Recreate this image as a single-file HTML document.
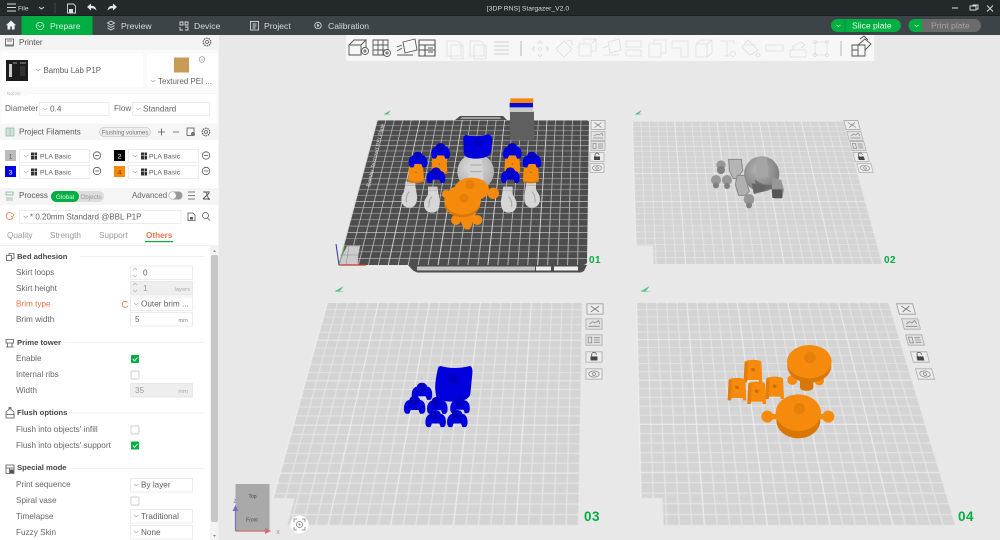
<!DOCTYPE html>
<html><head><meta charset="utf-8"><title>Stargazer</title>
<style>
html,body{margin:0;padding:0;background:#e8e8e8;width:1000px;height:540px;overflow:hidden}
#w{position:relative;width:1000px;height:540px;overflow:hidden;filter:blur(.35px)}
.p{position:absolute;left:0;top:0;width:250px;height:250px;transform-origin:0 0;background-color:#d4d4d4;
background-image:linear-gradient(to right,#efefef 1.2px,transparent 1.2px),linear-gradient(to bottom,#efefef 1.1px,transparent 1.1px),linear-gradient(to right,#e6e6e6 .9px,transparent .9px),linear-gradient(to bottom,#e6e6e6 1px,transparent 1px);
background-size:50px 50px,50px 50px,10px 10px,10px 10px}
.d{background-color:#4d4d4d;background-image:linear-gradient(to right,#d4d4d4 1.1px,transparent 1.1px),linear-gradient(to bottom,#d4d4d4 1.1px,transparent 1.1px),linear-gradient(to right,#b0b0b0 .9px,transparent .9px),linear-gradient(to bottom,#b0b0b0 1px,transparent 1px);border-radius:4px}
svg{position:absolute;left:0;top:0}
text{font-family:"Liberation Sans",sans-serif;font-size:8.2px;fill:#5f5f5f}
.t{fill:#d8dcdc;font-size:8.6px}
.b{font-weight:bold;fill:#444;font-size:7.7px}
.l{fill:#666}
.hd{fill:#555;font-size:8px}
.f{fill:#555;font-size:6.8px}
.n{fill:#00ae42;font-weight:bold;letter-spacing:.5px}
.ic{fill:none;stroke:#555;stroke-width:.8}
.fa{fill:none;stroke:#dedede;stroke-width:.8}
.dk{fill:none;stroke:#555;stroke-width:.9}
.tb{fill:none;stroke:#d7dbdb;stroke-width:.9}
.box{fill:#fff;stroke:#e4e4e4;stroke-width:.7}
.dis{fill:#eee;stroke:#e2e2e2;stroke-width:.7}
.blu{fill:#0000dc}.bd{fill:#0000c0}
.or{fill:#f58a0c}.od{fill:#d97706}
.wh{fill:#d6d6d6}.wd{fill:#9b9b9b}
.gr{fill:#979797}.gd{fill:#6d6d6d}
</style></head><body><div id="w">

<div class="p d" style="transform:matrix3d(.848,0,0,0,-.3568,.4224,0,-.000594,0,0,1,0,377,120,0,1)"></div>
<div class="p" style="transform:matrix3d(.844,0,0,0,-.346,.4216,0,-.000569,0,0,1,0,632,121,0,1);clip-path:polygon(0 0,100% 0,100% 100%,18px 100%,18px 222px,0 222px)"></div>
<div class="p" style="transform:matrix3d(1.02,0,0,0,-.4444,.5028,0,-.000741,0,0,1,0,327,302,0,1);clip-path:polygon(0 0,100% 0,100% 100%,18px 100%,18px 225px,0 225px)"></div>
<div class="p" style="transform:matrix3d(1.008,0,0,0,-.4864,.4772,0,-.00079,0,0,1,0,636,302,0,1);clip-path:polygon(0 0,100% 0,100% 100%,18px 100%,18px 225px,0 225px)"></div>

<svg width="1000" height="540" viewBox="0 0 1000 540" xmlns="http://www.w3.org/2000/svg">
<defs>
<radialGradient id="dome" cx=".42" cy=".38" r=".62"><stop offset="0" stop-color="#b8b8b8"/><stop offset="1" stop-color="#7c7c7c"/></radialGradient>
<radialGradient id="dome1" cx=".42" cy=".38" r=".62"><stop offset="0" stop-color="#dedede"/><stop offset="1" stop-color="#b0b0b0"/></radialGradient>
<path id="ch" d="M0 0l2.2 1.8L4.400 0" fill="none" stroke="#aaa" stroke-width=".7"/>
<g id="gear"><circle r="3.800" fill="none" stroke="#555" stroke-width="1.100" stroke-dasharray="1.600 .8"/><circle r="1.500" fill="none" stroke="#555" stroke-width=".8"/></g>
<g id="minus"><circle r="3.700" fill="none" stroke="#555" stroke-width=".8"/><path d="M-2 0h4" stroke="#555" stroke-width=".8"/></g>
<g id="spool"><path d="M0 0h3v3h-3zM3.500 0h2.500v3h-2.500zM0 3.500h3v3.500h-3zM3.500 3.500h2.500v3.500h-2.500z" fill="#333"/></g>
<g id="pen"><path d="M0 4l7-4-3 4 4 .5H0z" fill="#5cc08a"/></g>
<g id="cb"><rect width="8" height="8" rx=".8" fill="#fff" stroke="#bbb" stroke-width=".7"/></g>
<g id="cg"><rect width="8" height="8" rx=".8" fill="#00ae42"/><path d="M1.800 4l1.700 1.800 3-3.200" stroke="#fff" stroke-width=".9" fill="none"/></g>
<g id="sx"><rect x="-7" y="-4.500" width="14" height="9" fill="#ececec" stroke="#999" stroke-width=".7"/><path d="M-3.500-2.500l7 5M3.500-2.500l-7 5" stroke="#777" stroke-width=".7"/></g>
<g id="sa"><rect x="-7" y="-4.500" width="14" height="9" fill="#e2e2e2" stroke="#aaa" stroke-width=".7"/><path d="M-5 2h10M-4 0l3-2 2 1 3-2 1 3" stroke="#888" stroke-width=".7" fill="none"/></g>
<g id="so"><rect x="-7" y="-4.500" width="14" height="9" fill="#e2e2e2" stroke="#aaa" stroke-width=".7"/><path d="M-5-2.500h3v5h-3zM0-2h5M0 0h5M0 2h5" stroke="#888" stroke-width=".7" fill="none"/></g>
<g id="sl"><rect x="-7" y="-4.500" width="14" height="9" fill="#ececec" stroke="#aaa" stroke-width=".7"/><rect x="-3" y="-.5" width="6" height="3.500" fill="#444"/><path d="M-2-.5v-1.500a2 2 0 0 1 4 0" stroke="#444" fill="none" stroke-width=".7"/></g>
<g id="se"><rect x="-7" y="-4.500" width="14" height="9" fill="#ececec" stroke="#aaa" stroke-width=".7"/><ellipse rx="4.500" ry="2.700" fill="none" stroke="#888" stroke-width=".7"/><circle r="1.300" fill="none" stroke="#888" stroke-width=".7"/></g>
<g id="cap"><path d="M-28 22c0-14 8-22 14-22 2-14 26-14 28 0 8 0 14 8 14 22 0 8-2 12-6 14h-8l-4-10h-20l-4 10h-8c-4-2-6-6-6-14z"/></g>
<g id="blk"><path d="M-21 0c8-5 34-5 42 0l3 44c-8 8-40 8-48 0z" class="or"/><path d="M-24 44c8 8 40 8 48 0v6c-8 6-40 6-48 0z" class="od"/><circle r="1.800" cy="22" fill="#7a4a05"/></g>
<g id="brk"><path d="M-25 5c10-7 40-7 50 0l3 62h-10l-1-7h-34l-1 7h-10z" class="or"/><path d="M-25 5l-3 62h10l1-7 2-54z" class="od" opacity=".6"/><path d="M-5 24h10v9h-10z" fill="#c96c05"/></g>
<g id="grip"><path d="M-14 0h28l7 42c2 24-8 36-22 36-15 0-25-9-25-26 0-14 9-20 12-30z" class="wh"/><path d="M-2 30c-6 6-11 14-9 32" stroke="#a5a5a5" stroke-width="3" fill="none"/><path d="M-12 4h24M-14 12h28" stroke="#aaa" stroke-width="2"/></g>
</defs>

<!-- plate 1 extras -->
<path d="M455 120l5-4h43l4 4z" fill="#4d4d4d"/><path d="M460 119l2-2h38l1 2z" fill="#a0a0a0"/>
<path d="M408 265h179l-3 6-3 1.500H417l-4-2z" fill="#4d4d4d"/>
<rect x="417" y="266.500" width="118" height="4" fill="#c4c4c4"/><rect x="536" y="266.500" width="15" height="4" fill="#eee"/><rect x="554" y="266.500" width="24" height="4" fill="#eee"/>
<text transform="translate(370,187) rotate(-77)" style="font-size:5.500px;fill:#ddd">Bambu Textured PEI Plate</text>
<path d="M338 265h20v-8l2-11h-13l-4 8z" fill="#ccc" stroke="#999" stroke-width=".5"/><path d="M349 246l-3 19M340 255h19" stroke="#888" stroke-width=".5"/>
<path d="M339 265h27" stroke="#c33" stroke-width="1.200"/><path d="M336 244l3 21" stroke="#33a" stroke-width="1"/><path d="M339 265l6-20" stroke="#5a5" stroke-width=".8"/>

<!-- models plate 1 -->
<g transform="translate(330,90) scale(.3333)">
<rect x="540" y="65" width="72" height="86" fill="#5f5f5f"/><rect x="539" y="51" width="70" height="15" fill="#c9c9c9"/><rect x="539" y="38" width="70" height="14" fill="#0a0ad8"/><rect x="541" y="25" width="69" height="14" fill="#f58a0c"/>
<circle cx="437" cy="245" r="55" fill="url(#dome1)"/><path d="M420 200h34l6 70h-44z" fill="#d5d5d5"/><path d="M420 225h34M420 245h34" stroke="#a5a5a5" stroke-width="3"/>
<path d="M408 135c20 5 40 5 65-2 10 0 14 8 14 20l-4 35c-3 10-22 18-44 18-25 0-38-6-38-20l-1-34c0-12 2-16 8-17z" class="blu"/><circle cx="445" cy="158" r="13" class="bd"/>
<use href="#grip" x="240" y="275"/><use href="#grip" x="308" y="290"/><g transform="translate(534,290) scale(-1,1)"><use href="#grip"/></g><g transform="translate(604,275) scale(-1,1)"><use href="#grip"/></g>
<use href="#blk" x="258" y="225"/><use href="#blk" x="328" y="200"/><use href="#blk" x="547" y="200"/><use href="#blk" x="603" y="225"/>
<g class="blu"><use href="#cap" x="264" y="196"/><use href="#cap" x="332" y="170"/><use href="#cap" x="318" y="243"/><use href="#cap" x="547" y="170"/><use href="#cap" x="541" y="243"/><use href="#cap" x="606" y="196"/></g>
<g class="bd"><circle cx="262" cy="197" r="11"/><circle cx="330" cy="172" r="11"/><circle cx="316" cy="245" r="11"/><circle cx="545" cy="172" r="11"/><circle cx="539" cy="245" r="11"/><circle cx="604" cy="197" r="11"/></g>
<circle cx="378" cy="390" r="15" class="or"/><circle cx="442" cy="390" r="15" class="or"/><path d="M385 370h50l-8 32-8 16h-14l-10-16z" class="or"/>
<ellipse cx="397" cy="340" rx="54" ry="42" class="od"/>
<ellipse cx="425" cy="298" rx="52" ry="35" class="or"/><ellipse cx="398" cy="330" rx="55" ry="44" class="or"/>
<circle cx="348" cy="312" r="12" class="or"/><circle cx="490" cy="310" r="17" class="or"/><circle cx="420" cy="284" r="14" fill="#e57f08"/><circle cx="402" cy="324" r="14" fill="#e57f08"/>
</g>

<!-- models plate 2 -->
<g transform="translate(620,100) scale(.3333)">
<circle cx="425" cy="222" r="53" fill="url(#dome)"/><path d="M410 172h30l6 60h-40z" fill="#a5a5a5"/><path d="M405 238c25 22 50 22 70 2l-4 28h-64z" class="gd"/>
<path d="M456 232l28 8 8 30-6 26h-24l-6-30z" class="gr"/><path d="M455 268h32v26h-30z" fill="#555"/>
<path d="M326 178h38l4 34-16 24h-12l-12-24z" fill="#b5b5b5" stroke="#888" stroke-width="3"/>
<path d="M352 226h22l14 48-12 12h-20l-10-32z" fill="#b0b0b0" stroke="#888" stroke-width="3"/>
<circle cx="303" cy="195" r="14" class="gr"/><circle cx="303" cy="210" r="12" fill="#7f7f7f"/><circle cx="288" cy="240" r="15" class="gr"/><circle cx="288" cy="256" r="9" fill="#7f7f7f"/><circle cx="321" cy="240" r="15" class="gr"/><circle cx="321" cy="258" r="9" fill="#7f7f7f"/><circle cx="387" cy="298" r="16" class="gr"/><circle cx="387" cy="316" r="9" fill="#7f7f7f"/>
<path d="M395 250l42 6-4 18-32 8z" fill="#666"/>
</g>

<!-- models plate 3 -->
<g transform="translate(270,280) scale(.3333)">
<path d="M512 258c28 8 55 8 88 0 8 3 8 14 7 24l-6 60c-3 14-18 22-50 23-32 1-50-6-53-18l-2-16c-2-20 4-50 8-66 1-4 4-7 8-7z" class="blu"/><circle cx="550" cy="296" r="15" class="bd"/>
<g class="blu"><g transform="translate(456,320) scale(1.100)"><use href="#cap"/></g><g transform="translate(434,360) scale(1.150)"><use href="#cap"/></g><g transform="translate(502,362) scale(1.100)"><use href="#cap"/></g><g transform="translate(570,362) scale(1.050)"><use href="#cap"/></g><g transform="translate(497,402) scale(1.100)"><use href="#cap"/></g><g transform="translate(562,402) scale(1.100)"><use href="#cap"/></g></g>
<g class="bd"><circle cx="454" cy="322" r="12"/><circle cx="432" cy="365" r="13"/><circle cx="498" cy="364" r="13"/><circle cx="568" cy="364" r="13"/><circle cx="492" cy="405" r="13"/><circle cx="558" cy="405" r="13"/></g>
</g>

<!-- models plate 4 -->
<g transform="translate(630,280) scale(.3333)">
<path d="M510 300h40v22c0 14-40 14-40 0z" class="od"/>
<circle cx="487" cy="300" r="15" class="or"/><circle cx="568" cy="302" r="14" class="or"/>
<ellipse cx="538" cy="258" rx="66" ry="50" class="od"/>
<ellipse cx="538" cy="245" rx="67" ry="50" class="or"/><circle cx="540" cy="233" r="17" fill="#e57f08"/>
<use href="#brk" x="369" y="240"/><use href="#brk" x="321" y="294"/><use href="#brk" x="434" y="290"/><use href="#brk" x="380" y="305"/>
<ellipse cx="505" cy="422" rx="66" ry="53" class="od"/>
<circle cx="412" cy="410" r="18" class="or"/><circle cx="595" cy="410" r="18" class="or"/><rect x="424" y="402" width="24" height="16" class="or"/><rect x="560" y="402" width="24" height="16" class="or"/>
<ellipse cx="505" cy="398" rx="68" ry="55" class="or"/>
<circle cx="508" cy="386" r="17" fill="#e57f08"/>
</g>

<!-- plate labels/pens/side icons -->
<use href="#pen" x="384" y="110"/><use href="#pen" x="635" y="110"/>
<g transform="translate(335,286) scale(1.250)"><use href="#pen"/></g><g transform="translate(641,286) scale(1.250)"><use href="#pen"/></g>
<text x="589" y="263" class="n" style="font-size:10px">01</text><text x="884" y="263" class="n" style="font-size:10px">02</text>
<text x="584" y="521" class="n" style="font-size:13.500px">03</text><text x="958" y="521" class="n" style="font-size:13.500px">04</text>
<use href="#sx" x="598" y="125"/><use href="#sa" x="598" y="136"/><use href="#so" x="598" y="146"/><use href="#sl" x="597" y="157"/><use href="#se" x="597" y="168"/>
<g transform="translate(852,125) skewX(15)"><use href="#sx"/></g><g transform="translate(855,136) skewX(15)"><use href="#sa"/></g><g transform="translate(858,146) skewX(15)"><use href="#so"/></g><g transform="translate(861,157) skewX(15)"><use href="#sl"/></g><g transform="translate(865,168) skewX(15)"><use href="#se"/></g>
<g transform="translate(595,309) scale(1.150)"><use href="#sx"/></g><g transform="translate(594,324) scale(1.150)"><use href="#sa"/></g><g transform="translate(594,340) scale(1.150)"><use href="#so"/></g><g transform="translate(594,357) scale(1.150)"><use href="#sl"/></g><g transform="translate(594,374) scale(1.150)"><use href="#se"/></g>
<g transform="translate(906,309) scale(1.150) skewX(15)"><use href="#sx"/></g><g transform="translate(911,324) scale(1.150) skewX(15)"><use href="#sa"/></g><g transform="translate(915,340) scale(1.150) skewX(15)"><use href="#so"/></g><g transform="translate(920,357) scale(1.150) skewX(15)"><use href="#sl"/></g><g transform="translate(925,374) scale(1.150) skewX(15)"><use href="#se"/></g>

<!-- toolbar -->
<rect x="346" y="35" width="528" height="26" fill="#f7f7f7"/>
<g class="dk"><path d="M349 45h12v10h-12zM349 45l5-5h12l-5 5M366 40v9"/><circle cx="365" cy="51" r="3.500" fill="#fff"/><path d="M363 51h4M365 49v4"/>
<path d="M373 40h15v15h-15zM373 45h15M373 50h15M378 40v15M383 40v15"/><circle cx="387" cy="53" r="3.500" fill="#fff"/><path d="M385 53h4M387 51v4"/>
<path d="M403 42l12-3 2 11-12 3zM397 55h16M397 47l5-2M397 51l5-3"/>
<path d="M419 40h16v16h-16zM419 45h16M419 50h16M425 45v11M428 48h5M428 52h5" stroke-width="1.100"/></g>
<g class="fa"><path d="M447 41h11l3 3v12h-14zM451 45h12v14h-12z"/><path d="M470 41h11l3 3v12h-14zM474 45h12v14h-12z"/><path d="M494 42h15M494 46h15M494 50h15M494 54h15" stroke-width="1.500"/>
<path d="M540 41l-2 2h4zM540 57l-2-2h4zM532 49l2-2v4zM549 49l-2-2v4z"/><circle cx="540" cy="49" r="1.500"/>
<path d="M564 41l8 8-8 8-8-8zM567 40l5 1v4"/><path d="M579 44h12v12h-12zM584 44v-5h12v12h-5M596 39l-4 4"/>
<path d="M608 42l11-3 2 11-11 3zM603 55h16M603 48l5-2"/><path d="M626 41h15v6h-15zM626 50h15v6h-15z"/><path d="M649 44h12v13h-12zM654 44v-4h12v13h-5"/><path d="M672 41h16v16h-7v-9h-9z"/>
<path d="M696 44l5-4h11v13l-5 4h-11zM696 44h11v13M707 44l5-4"/><path d="M720 41h14v3M727 41v15M724 56h6"/><circle cx="733" cy="54" r="2.500"/>
<path d="M748 40l10 10-8 5-8-8zM744 45h12"/><circle cx="758" cy="55" r="2"/><rect x="766" y="45" width="17" height="6"/><path d="M790 50h16v7h-16zM793 50v-4l8-4 4 3-4 3"/><rect x="815" y="42" width="12" height="13" rx="1"/><circle cx="815" cy="42" r="1.500"/><circle cx="827" cy="42" r="1.500"/><circle cx="815" cy="55" r="1.500"/><circle cx="827" cy="55" r="1.500"/></g>
<path d="M521 41v15M841 41v15" stroke="#c4c4c4" stroke-width="1.300"/>
<g class="dk" stroke-width="1"><path d="M852 45h13v11h-13zM852 50h6M858 45v11M858 45l7-6 6 5-6 6"/><path d="M860 39l4-3 4 4"/></g>

<!-- top bars -->
<rect x="0" y="0" width="1000" height="15.500" fill="#23292b"/>
<rect x="0" y="15.500" width="1000" height="19.500" fill="#3c4447"/>
<path d="M0 15.500h1000" stroke="#1b1f20"/>
<path d="M7 4h9M7 7.500h9M7 11h9" stroke="#d8dcdc" stroke-width="1"/><text x="18" y="10.500" class="t" style="font-size:6.500px">File</text>
<path d="M39 7l2.500 2 2.500-2" class="tb"/><path d="M55 3v10" stroke="#3c4447"/>
<path d="M67.500 4h6l2 2v7h-8z" class="tb"/><rect x="69" y="9" width="4" height="3.500" fill="#d8dcdc"/>
<path d="M87 7l4-3.500v2.200c3.500 0 5 1.500 5.500 5-1.500-2-3-2.500-5.500-2.500v2.300z" fill="#e3e6e6"/>
<path d="M117 7l-4-3.500v2.200c-3.500 0-5 1.500-5.500 5 1.500-2 3-2.500 5.500-2.500v2.300z" fill="#e3e6e6"/>
<text x="528" y="10.500" text-anchor="middle" class="t" style="font-size:6.800px">[3DP RNS] Stargazer_V2.0</text>
<path d="M952 8h6" stroke="#d8dcdc" stroke-width="1"/><path d="M970 6h6v4h-6zM973 6v-1h5v4h-2" class="tb"/><path d="M987 5.500l6 6M993 5.500l-6 6" stroke="#d8dcdc" stroke-width=".9"/>
<rect x="21.500" y="16" width="71" height="19" fill="#00ae42"/>
<path d="M11 20.500l-5 4.800h1.500v4.200h2.800v-3h1.500v3h2.800v-4.200H16z" fill="#f2f2f2"/>
<circle cx="40" cy="26" r="3.700" fill="none" stroke="#c7ecd5" stroke-width=".8"/><path d="M37.500 25l2.500 1.500 2.500-1.500" fill="none" stroke="#c7ecd5" stroke-width=".7"/>
<text x="50" y="29" class="t" style="fill:#d6f3e1">Prepare</text>
<path d="M107.500 23l3.500-2 3.500 2-3.500 2zM107.500 25.500l3.500 2 3.500-2M107.500 28l3.500 2 3.500-2" class="tb"/><text x="121" y="29" class="t">Preview</text>
<path d="M180 22h3v3h-3zM185 22h3v3h-3zM180 27v3h3M185 27h3v3h-3" class="tb"/><text x="194" y="29" class="t">Device</text>
<rect x="250.500" y="21.500" width="8" height="8.500" class="tb"/><path d="M252.500 24h4M252.500 26h4M252.500 28h3" class="tb" stroke-width=".6"/><text x="264" y="29" class="t">Project</text>
<circle cx="318" cy="25.500" r="3.200" class="tb"/><circle cx="318" cy="25.500" r="1.200" fill="#d8dcdc"/><text x="328" y="29" class="t">Calibration</text>
<rect x="831" y="19" width="70" height="13" rx="6.500" fill="#00ae42"/><path d="M845 19v13" stroke="#048a38" stroke-width=".8"/><path d="M836.500 25l2 1.500 2-1.500" stroke="#d8f3e2" fill="none" stroke-width=".7"/>
<text x="852" y="28.500" style="fill:#eafaf0;font-size:8.600px">Slice plate</text>
<rect x="909" y="19" width="72" height="13" rx="6.500" fill="#6b6b6b"/><path d="M915 19h7v13h-7a6.500 6.500 0 0 1 0-13z" fill="#00ae42"/><path d="M914.500 25l2 1.500 2-1.500" stroke="#d8f3e2" fill="none" stroke-width=".7"/>
<text x="931" y="28.500" style="fill:#a5a5a5;font-size:8.600px">Print plate</text>

<!-- left panel -->
<rect x="0" y="35" width="218.500" height="505" fill="#fff"/>
<rect x="0" y="35" width="218" height="15" fill="#f3f4f3"/>
<rect x="5.500" y="39" width="8" height="6" class="ic"/><path d="M7 41h5M5 46h9" class="ic"/><text x="19" y="45" class="hd">Printer</text><use href="#gear" x="207" y="42"/>
<rect x="0" y="50" width="218" height="75" fill="#fafafa"/>
<rect x="2" y="53" width="141" height="34" rx="2" fill="#fff"/><rect x="147" y="53" width="70" height="34" rx="2" fill="#fff"/>
<rect x="6" y="60" width="22" height="21" fill="#1c1c1c"/><path d="M9 64v13h3v-13z" fill="#ccc"/><path d="M13 63h4M20 63h6" stroke="#999"/><rect x="20" y="66" width="5" height="10" fill="#333"/>
<use href="#ch" x="36" y="69"/><text x="43.500" y="73" style="font-size:7.900px">Bambu Lab P1P</text>
<rect x="174" y="57.500" width="15" height="15" fill="#c79a55"/><circle cx="202" cy="59.500" r="2.800" fill="none" stroke="#888" stroke-width=".6"/><path d="M202 58.500v2.500" stroke="#888" stroke-width=".6"/>
<use href="#ch" x="151" y="80"/><text x="158" y="84" style="font-size:7.900px">Textured PEI ...</text>
<rect x="2" y="93" width="214" height="30" fill="#fff"/><path d="M3 93.500h213" stroke="#ececec" stroke-width=".6"/><rect x="5" y="90" width="22" height="6" fill="#fafafa"/><text x="7" y="95" style="font-size:4.500px;fill:#bbb">Nozzle</text>
<text x="5" y="111" class="l">Diameter</text><rect x="39.500" y="102.500" width="69.500" height="13" class="box"/><use href="#ch" x="43" y="108"/><text x="50" y="111.500">0.4</text>
<text x="114" y="111" class="l">Flow</text><rect x="132.500" y="102.500" width="77" height="13" class="box"/><use href="#ch" x="136" y="108"/><text x="143" y="111.500">Standard</text>

<rect x="0" y="124" width="218" height="16" fill="#f6f6f6"/>
<rect x="6" y="128" width="8" height="8" fill="#cfe6d6" stroke="#7eb08f" stroke-width=".6"/><path d="M10 128v8" stroke="#7eb08f" stroke-width=".6"/>
<text x="19" y="134.500" class="hd">Project Filaments</text>
<rect x="99.500" y="127.500" width="51" height="9" rx="4.500" fill="#eee" stroke="#bbb" stroke-width=".6"/><text x="125" y="134.500" text-anchor="middle" style="font-size:6px;fill:#777">Flushing volumes</text>
<path d="M158 132h7M161.500 128.500v7M173 132h6" stroke="#555" stroke-width=".8"/><rect x="187" y="128" width="7" height="7.500" class="ic"/><circle cx="193" cy="134" r="2" fill="#777"/><use href="#gear" x="206" y="132"/>

<rect x="5" y="150" width="11" height="11" fill="#bcbcbc"/><text x="10.500" y="158.500" text-anchor="middle" class="f" style="fill:#555">1</text>
<rect x="19.500" y="149.500" width="70" height="13" class="box"/><use href="#ch" x="24" y="155"/><use href="#spool" x="31" y="152.500"/><text x="40" y="158.500" class="f">PLA Basic</text><use href="#minus" x="97" y="155.500"/>
<rect x="114" y="150" width="11" height="11" fill="#000"/><text x="119.500" y="158.500" text-anchor="middle" class="f" style="fill:#fff">2</text>
<rect x="128.500" y="149.500" width="70" height="13" class="box"/><use href="#ch" x="133" y="155"/><use href="#spool" x="141" y="152.500"/><text x="149" y="158.500" class="f">PLA Basic</text><use href="#minus" x="206" y="155.500"/>
<rect x="5" y="166" width="11" height="11" fill="#0000e6"/><text x="10.500" y="174.500" text-anchor="middle" class="f" style="fill:#fff">3</text>
<rect x="19.500" y="165.500" width="70" height="13" class="box"/><use href="#ch" x="24" y="171"/><use href="#spool" x="31" y="168.500"/><text x="40" y="174.500" class="f">PLA Basic</text><use href="#minus" x="97" y="171"/>
<rect x="114" y="166" width="11" height="11" fill="#f58a0c"/><text x="119.500" y="174.500" text-anchor="middle" class="f" style="fill:#6a3a00">4</text>
<rect x="128.500" y="165.500" width="70" height="13" class="box"/><use href="#ch" x="133" y="171"/><use href="#spool" x="141" y="168.500"/><text x="149" y="174.500" class="f">PLA Basic</text><use href="#minus" x="206" y="171"/>

<rect x="0" y="188" width="218" height="17" fill="#f5f5f5"/>
<path d="M6 195h7v-3h-7zM6 198h7M6 200h7" fill="none" stroke="#7eb08f" stroke-width=".8"/><text x="19" y="198" class="hd">Process</text>
<rect x="51" y="191" width="53" height="11" rx="5.500" fill="#ddd"/><rect x="51" y="191" width="28" height="11" rx="5.500" fill="#00ae42"/><text x="65" y="198.800" text-anchor="middle" style="font-size:6.300px;fill:#e9f9ef">Global</text><text x="91" y="198.800" text-anchor="middle" style="font-size:6.300px;fill:#999">Objects</text>
<text x="132" y="198" class="l" style="font-size:7.900px">Advanced</text><rect x="168.500" y="191.500" width="14" height="8" rx="4" fill="#999"/><circle cx="172.500" cy="195.500" r="3.600" fill="#fff" stroke="#bbb" stroke-width=".4"/>
<path d="M188 192h7M188 195.500h7M188 199h7" stroke="#555" stroke-width=".8"/><path d="M203 192h7M203 199h7M206 192l3 8M203 199l6-6" stroke="#555" stroke-width=".9"/>
<path d="M12.500 214a3.500 3.500 0 1 0 .5 3" fill="none" stroke="#e8764f" stroke-width=".8"/><path d="M11 216.500l2.500-.5.500-2.500" fill="none" stroke="#e8764f" stroke-width=".7"/>
<rect x="19.500" y="210.500" width="161.500" height="13" class="box"/><use href="#ch" x="23.500" y="216"/><text x="30" y="219.500" style="font-size:8px">* 0.20mm Standard @BBL P1P</text>
<path d="M188 213h5l2 2v5.500h-7z" class="ic"/><rect x="190" y="217" width="3" height="2.500" fill="#555"/>
<circle cx="205.500" cy="215.500" r="3" class="ic"/><path d="M207.500 218l2.500 2.500" class="ic"/>
<text x="7" y="238" style="fill:#999">Quality</text><text x="50" y="238" style="fill:#999">Strength</text><text x="99" y="238" style="fill:#999">Support</text><text x="146" y="238" style="fill:#e8764f;font-weight:bold">Others</text>
<rect x="145" y="241" width="28" height="1.200" fill="#00ae42"/>
<path d="M0 245.500h210" stroke="#f0f0f0"/>

<!-- scrollbar -->
<rect x="210" y="245" width="8.500" height="295" fill="#f3f3f3"/><rect x="211" y="255" width="7" height="267" rx="2" fill="#c7c7c7"/><path d="M214.500 250l-1.500 2h3zM214.500 537l-1.500-2h3z" fill="#888"/>

<!-- Bed adhesion -->
<path d="M6.500 255.500h5v5h-5zM9 255.500v-2h5v5h-2" class="ic"/><text x="17" y="259" class="b">Bed adhesion</text><path d="M80 256.500h124" stroke="#eee" stroke-width=".7"/>
<text x="16" y="275" class="l">Skirt loops</text><rect x="130.500" y="266" width="62" height="13.500" class="box"/><path d="M133 270l2-2 2 2M133 275l2 2 2-2" fill="none" stroke="#aaa" stroke-width=".6"/><text x="143" y="275.500">0</text>
<text x="16" y="291" class="l">Skirt height</text><rect x="130.500" y="281.500" width="62" height="13.500" class="dis"/><path d="M133 285l2-2 2 2M133 290l2 2 2-2" fill="none" stroke="#aaa" stroke-width=".6"/><text x="143" y="291" style="fill:#999">1</text><text x="190" y="291" text-anchor="end" style="font-size:5.800px;fill:#aaa">layers</text>
<text x="16" y="306.500" style="fill:#e8764f">Brim type</text><path d="M127.500 302.500a3 3 0 1 0 .5 3" fill="none" stroke="#e8764f" stroke-width=".8"/>
<rect x="130.500" y="297" width="62" height="13.500" class="box"/><use href="#ch" x="134" y="303"/><text x="141" y="306.500">Outer brim ...</text>
<text x="16" y="322" class="l">Brim width</text><rect x="130.500" y="312.500" width="62" height="13.500" class="box"/><text x="135" y="322">5</text><text x="188" y="322" text-anchor="end" style="font-size:5.800px;fill:#888">mm</text>
<!-- Prime tower -->
<path d="M6 339.500h7.500v3.500H6zM6 347h7.500M7.500 343v4M12 343v4" class="ic"/><text x="17" y="345" class="b">Prime tower</text><path d="M65 342.500h139" stroke="#eee" stroke-width=".7"/>
<text x="16" y="361" class="l">Enable</text><use href="#cg" x="131" y="355"/>
<text x="16" y="377" class="l">Internal ribs</text><use href="#cb" x="131" y="371"/>
<text x="16" y="393" class="l">Width</text><rect x="130.500" y="383.500" width="62" height="13.500" class="dis"/><text x="135" y="393" style="fill:#999">35</text><text x="188" y="393" text-anchor="end" style="font-size:5.800px;fill:#aaa">mm</text>
<!-- Flush options -->
<path d="M6 412l4-3.500 4 3.500v6H6zM6 414.500h8M9 409v-1.500h2V409" class="ic"/><text x="17" y="415" class="b">Flush options</text><path d="M70 413h134" stroke="#eee" stroke-width=".7"/>
<text x="16" y="432" class="l">Flush into objects' infill</text><use href="#cb" x="131" y="426"/>
<text x="16" y="448" class="l">Flush into objects' support</text><use href="#cg" x="131" y="441.500"/>
<!-- Special mode -->
<path d="M6 465h8v8.500H6zM6 468h8M9.500 468v5.500" class="ic"/><rect x="10" y="469.500" width="3.500" height="3.500" fill="#555"/><text x="17" y="470" class="b">Special mode</text><path d="M70 468.500h134" stroke="#eee" stroke-width=".7"/>
<text x="16" y="487" class="l">Print sequence</text><rect x="130.500" y="478.500" width="62" height="13.500" class="box"/><use href="#ch" x="134" y="484"/><text x="141" y="487.500">By layer</text>
<text x="16" y="503" class="l">Spiral vase</text><use href="#cb" x="131" y="497"/>
<text x="16" y="519" class="l">Timelapse</text><rect x="130.500" y="509.500" width="62" height="13.500" class="box"/><use href="#ch" x="134" y="515"/><text x="141" y="519">Traditional</text>
<text x="16" y="535" class="l">Fuzzy Skin</text><rect x="130.500" y="525.500" width="62" height="13.500" class="box"/><use href="#ch" x="134" y="531"/><text x="141" y="535">None</text>

<!-- orientation cube -->
<rect x="235.500" y="484" width="34" height="47" fill="#a9a9a9"/><text x="252.500" y="498" text-anchor="middle" style="font-size:5px;fill:#444">Top</text><text x="252" y="521.500" text-anchor="middle" style="font-size:5px;fill:#444">Front</text>
<path d="M235.500 531v-22" stroke="#7a6fc4" stroke-width="1.200"/><path d="M235.500 505l-3 6h6z" fill="#7a6fc4"/><path d="M235.500 531h30" stroke="#c9716f" stroke-width="1.200"/><path d="M271 531l-6-3v6z" fill="#c9716f"/>
<text x="235" y="503" text-anchor="middle" style="font-size:5px;fill:#7a6fc4">Z</text><text x="278" y="534" text-anchor="middle" style="font-size:5px;fill:#c9716f">X</text>
<circle cx="299.500" cy="524.500" r="9" fill="#fff"/><path d="M294 522v-3h3M302 519h3v3M305 527v3h-3M297 530h-3v-3" fill="none" stroke="#777" stroke-width=".8"/><circle cx="299.500" cy="524.500" r="3" fill="none" stroke="#777" stroke-width=".8"/><circle cx="299.500" cy="524.500" r="1" fill="#777"/>
</svg>
</div></body></html>
